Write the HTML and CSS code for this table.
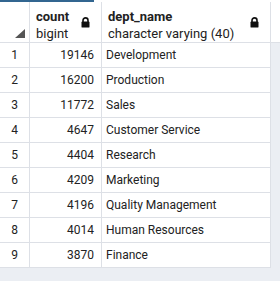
FILE: index.html
```html
<!DOCTYPE html>
<html>
<head>
<meta charset="utf-8">
<link rel="stylesheet" href="styles.css">
</head>
<body>
<div class="top"><div class="tabbar"></div></div>
<div class="grid">
  <div class="hrow">
    <div class="hcell rn"><span class="corner"></span></div>
    <div class="hcell c-count">
      <div class="htext"><div class="hname">count</div><div class="htype">bigint</div></div>
      <svg class="lock" width="9" height="11" viewBox="0 0 9 11"><path d="M2 5V3.4a2.5 2.5 0 0 1 5 0V5" fill="none" stroke="#111" stroke-width="1.6"/><rect x="0.5" y="4.6" width="8" height="6" rx="0.9" fill="#111"/></svg>
    </div>
    <div class="hcell c-dept">
      <div class="htext"><div class="hname">dept_name</div><div class="htype">character varying (40)</div></div>
      <svg class="lock" width="9" height="11" viewBox="0 0 9 11"><path d="M2 5V3.4a2.5 2.5 0 0 1 5 0V5" fill="none" stroke="#111" stroke-width="1.6"/><rect x="0.5" y="4.6" width="8" height="6" rx="0.9" fill="#111"/></svg>
    </div>
    <div class="hfill"></div>
  </div>
  <div class="row"><div class="cell rn">1</div><div class="cell c-count num">19146</div><div class="cell c-dept">Development</div></div>
  <div class="row"><div class="cell rn">2</div><div class="cell c-count num">16200</div><div class="cell c-dept">Production</div></div>
  <div class="row"><div class="cell rn">3</div><div class="cell c-count num">11772</div><div class="cell c-dept">Sales</div></div>
  <div class="row"><div class="cell rn">4</div><div class="cell c-count num">4647</div><div class="cell c-dept">Customer Service</div></div>
  <div class="row"><div class="cell rn">5</div><div class="cell c-count num">4404</div><div class="cell c-dept">Research</div></div>
  <div class="row"><div class="cell rn">6</div><div class="cell c-count num">4209</div><div class="cell c-dept">Marketing</div></div>
  <div class="row"><div class="cell rn">7</div><div class="cell c-count num">4196</div><div class="cell c-dept">Quality Management</div></div>
  <div class="row"><div class="cell rn">8</div><div class="cell c-count num">4014</div><div class="cell c-dept">Human Resources</div></div>
  <div class="row"><div class="cell rn">9</div><div class="cell c-count num">3870</div><div class="cell c-dept">Finance</div></div>
</div>
</body>
</html>
```
FILE: styles.css
```css
* { box-sizing: border-box; }
html, body {
  margin: 0;
  padding: 0;
  background: #ebeef3;
  font-family: Roboto, "Liberation Sans", sans-serif;
  color: #222;
}
.top {
  height: 2px;
  background: #fff;
}
.tabbar {
  width: 94px;
  height: 2px;
  background: #326690;
}
.grid {
  display: flex;
  flex-direction: column;
}
.hrow {
  display: flex;
  height: 41px;
  background: #fff;
  border-bottom: 1px solid #dde0e6;
}
.hcell {
  position: relative;
  border-right: 1px solid #dde0e6;
  display: flex;
  align-items: flex-start;
  padding-top: 6px;
}
.hfill { flex: 1; }
.rn { width: 30px; }
.c-count { width: 72px; }
.c-dept { width: 169px; }
.hcell.c-count, .hcell.c-dept { padding-left: 6px; }
.htext { flex: 1; }
.hname {
  font-weight: bold;
  font-size: 13px;
  line-height: 17px;
  color: #222;
}
.htype {
  font-size: 13px;
  line-height: 17px;
  color: #222;
}
.lock {
  margin-top: 9px;
  margin-right: 11px;
}
.corner {
  position: absolute;
  right: 4px;
  bottom: 4px;
  width: 0;
  height: 0;
  border-style: solid;
  border-width: 0 0 9px 10px;
  border-color: transparent transparent #555 transparent;
}
.row {
  display: flex;
  height: 25px;
}
.cell {
  background: #fff;
  border-right: 1px solid #dde0e6;
  border-bottom: 1px solid #dde0e6;
  font-size: 12px;
  line-height: 24px;
  white-space: nowrap;
}
.cell.rn { text-align: center; }
.cell.num { text-align: right; padding-right: 7px; }
.cell.c-dept { padding-left: 4px; }
```
